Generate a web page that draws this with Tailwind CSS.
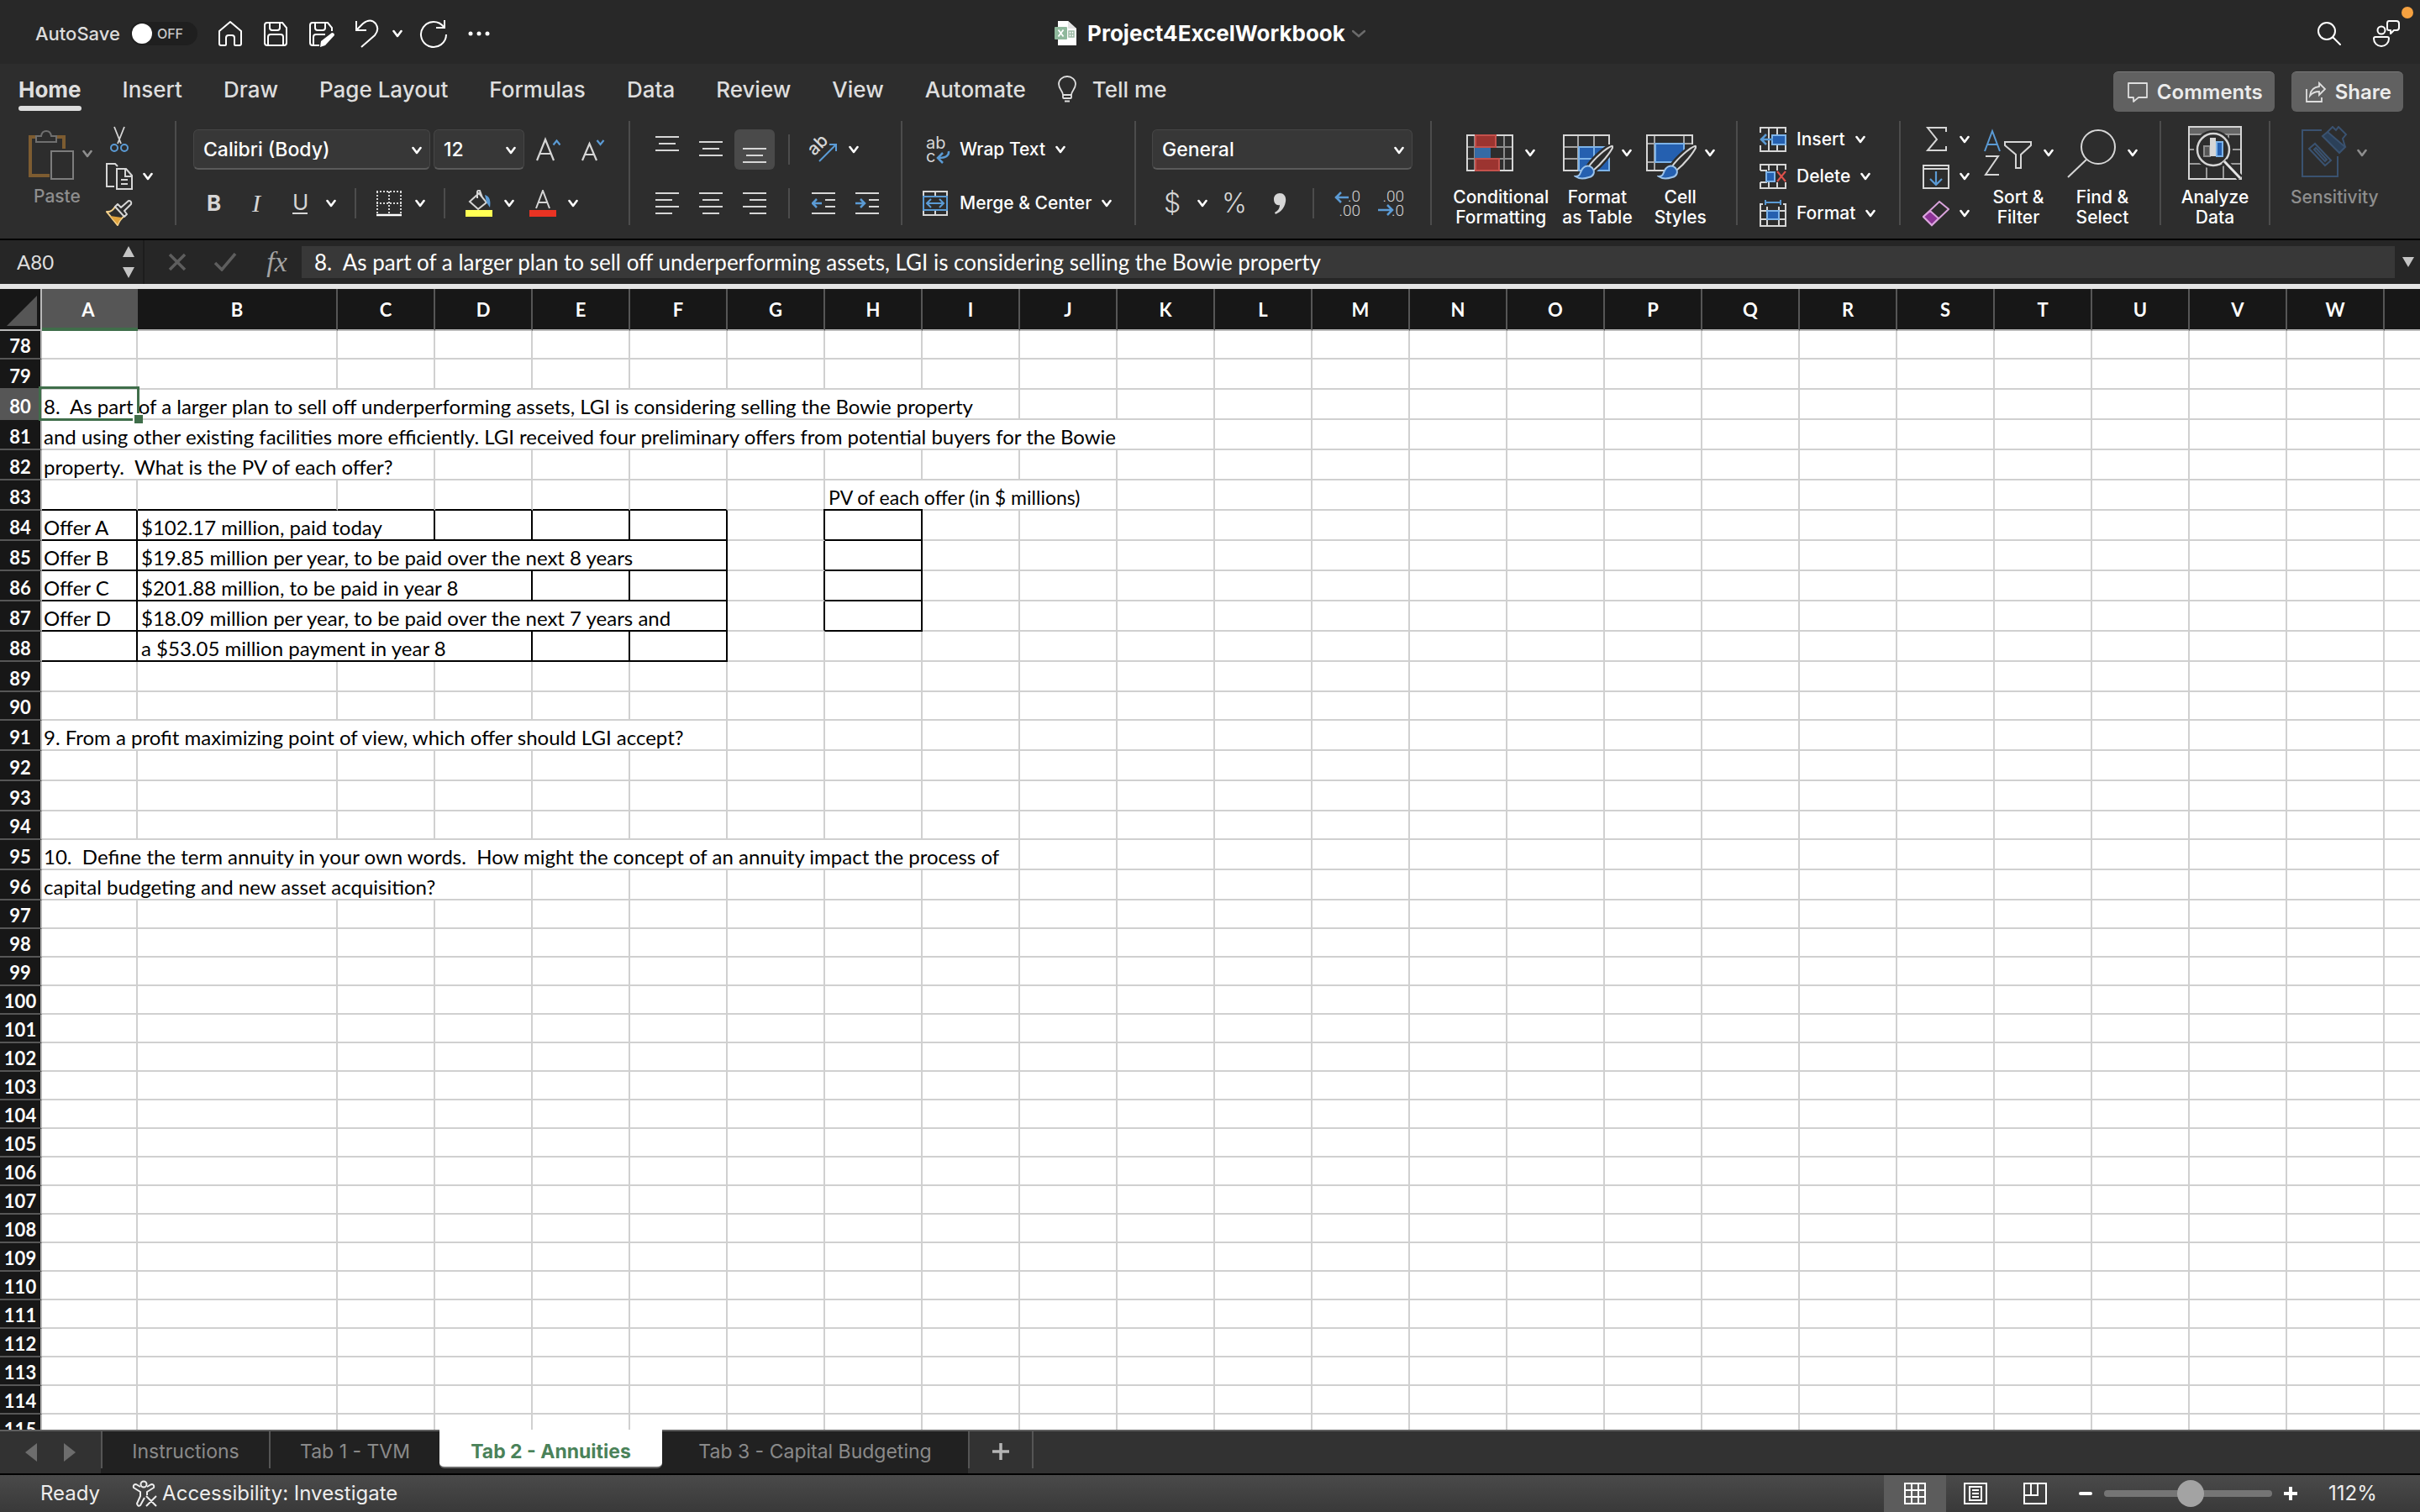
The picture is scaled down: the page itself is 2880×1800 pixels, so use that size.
<!DOCTYPE html>
<html lang="en">
<head>
    <meta charset="UTF-8">
    <meta name="viewport" content="width=device-width, initial-scale=1.0">
    <title>Project4ExcelWorkbook</title>
    <script src="https://cdn.jsdelivr.net/npm/@tailwindcss/browser@4"></script>
</head>
<body class="flex flex-col h-screen overflow-hidden bg-[#2d2d2d] font-['Inter',sans-serif] text-white">

    <!-- Shared shapes -->
    <svg class="hidden">
        <symbol id="chevron" viewBox="0 0 12 10"><path d="M1.500 2 6 8l4.500-6" fill="none" stroke="currentColor" stroke-width="2.600" stroke-linecap="round" stroke-linejoin="round"/></symbol>
        <symbol id="brush" viewBox="0 0 48 42">
            <path d="M45 2c-6 2-20 14-27 24l5 5C33 23 43 10 46 4c.5-1.500 0-2.500-1-2z" fill="#2d2d2d" stroke="#2d2d2d" stroke-width="7"/>
            <path d="M45 2c-6 2-20 14-27 24l5 5C33 23 43 10 46 4c.5-1.500 0-2.500-1-2z" fill="#2d2d2d" stroke="#d6d6d6" stroke-width="2"/>
            <path d="M2 38c5 0 5-3 7-7 3-6 9-7 13-3 4 5 1 10-4 11-6 2-12 2-16-1z" fill="#2560b0" stroke="#9cc3ea" stroke-width="2"/>
        </symbol>
    </svg>

    <!-- Title bar -->
    <header class="relative flex h-[76px] shrink-0 items-center justify-between bg-[#282828] pt-1 pl-[42px] pr-6">
        <div class="flex items-center">
            <label for="autosave" class="text-[22px] font-medium text-[#dcdcdc]">AutoSave</label>
            <button id="autosave" type="button" class="ml-3 flex h-7 w-20 items-center gap-1.5 rounded-full bg-[#1f1f1f] p-0.5 text-base font-medium text-[#c9c9c9]">
                <span class="size-6 rounded-full bg-white"></span>OFF
            </button>
            <button type="button" aria-label="Home" class="ml-6">
                <svg class="h-8 w-[30px]" viewBox="0 0 30 32" fill="none" stroke="#fff" stroke-width="2"><path d="M15 2 2 13v15q0 2 2 2h5q1 0 1-1v-8q0-3 3-3h4q3 0 3 3v8q0 1 1 1h5q2 0 2-2V13z" stroke-linejoin="round"/></svg>
            </button>
            <button type="button" aria-label="Save" class="ml-6">
                <svg class="h-8 w-[30px]" viewBox="0 0 30 32" fill="none" stroke="#fff" stroke-width="2"><path d="M5 3h18l5 6v18q0 3-3 3H5q-3 0-3-3V6q0-3 3-3z"/><path d="M8 3v6q0 3 3 3h6q3 0 3-3V3M6 30V20q0-3 3-3h12q3 0 3 3v10"/></svg>
            </button>
            <button type="button" aria-label="Save a copy" class="ml-6">
                <svg class="h-8 w-8" viewBox="0 0 32 32" fill="none" stroke="#fff" stroke-width="2"><path d="M13 30H5q-3 0-3-3V6q0-3 3-3h18l5 6v4"/><path d="M8 3v6q0 3 3 3h6q3 0 3-3V3M6 30V20q0-3 3-3h11"/><path d="M28 15q3 0 3 3L20 30l-6 2 1-7z" fill="#fff" stroke="none"/></svg>
            </button>
            <button type="button" aria-label="Undo" class="ml-[22px]">
                <svg class="h-9 w-[30px]" viewBox="0 0 30 36" fill="none" stroke="#fff" stroke-width="2"><path d="M3 3v11h12M4 13l7-7q9-7 15 0 5 7-1 14L9 34"/></svg>
            </button>
            <button type="button" aria-label="Undo history" class="ml-4"><svg class="h-2.5 w-3"><use href="#chevron"/></svg></button>
            <button type="button" aria-label="Repeat" class="ml-5">
                <svg class="h-9 w-[34px]" viewBox="0 0 34 36" fill="none" stroke="#fff" stroke-width="2"><path d="M30 2v9H20M29 10A15 15 0 1 0 32 19"/></svg>
            </button>
            <button type="button" aria-label="More" class="ml-6">
                <svg class="h-2 w-[26px]" viewBox="0 0 26 8" fill="#fff"><circle cx="3" cy="4" r="2.500"/><circle cx="13" cy="4" r="2.500"/><circle cx="23" cy="4" r="2.500"/></svg>
            </button>
        </div>
        <div class="absolute inset-x-0 flex items-center justify-center">
            <svg class="h-[30px] w-[27px]" viewBox="0 0 27 30"><path d="M4 0h12l10 9v20H4z" fill="#fff"/><path d="M16 0l10 9H16z" fill="#e3e3e3"/><path d="M17 12h6v7h-6zM20 12v7M17 15.500h6" fill="none" stroke="#9dbba6" stroke-width="1.500"/><rect y="7" width="15" height="15" rx="1" fill="#8fb89c"/><path d="M4.500 10.500l6 8M10.500 10.500l-6 8" stroke="#fff" stroke-width="1.800"/></svg>
            <h1 class="ml-3 text-[26px] font-bold leading-8">Project4ExcelWorkbook</h1>
            <svg class="ml-2 h-2.5 w-4 text-[#6b6b6b]" viewBox="0 0 16 10"><path d="M1 2l7 6 7-6" fill="none" stroke="currentColor" stroke-width="2.500" stroke-linecap="round"/></svg>
        </div>
        <div class="relative flex items-center gap-[38px]">
            <button type="button" aria-label="Search">
                <svg class="size-7" viewBox="0 0 28 28" fill="none" stroke="#fff" stroke-width="2" stroke-linecap="round"><circle cx="11" cy="11" r="10"/><path d="M18.500 18.500 27 27"/></svg>
            </button>
            <button type="button" aria-label="Account" class="relative">
                <svg class="size-8" viewBox="0 0 32 32" fill="none" stroke="#fff" stroke-width="2" stroke-linejoin="round"><circle cx="10" cy="12" r="4.500"/><path d="M3 20h14q2 0 2 2c0 5-4 9-9 9s-9-4-9-9q0-2 2-2zM19 1h9q3 0 3 3v5q0 3-3 3h-3l-4 4v-4h-2q-2 0-2-2V4q0-3 2-3z"/></svg>
                <span class="absolute -top-4 -right-4 size-3.5 rounded-full bg-[#f5a140]"></span>
            </button>
        </div>
    </header>

    <!-- Ribbon tabs -->
    <div class="flex h-[66px] shrink-0 items-center justify-between pl-[22px] pr-5">
        <nav class="flex items-center gap-[49px] pb-1.5 text-[26px] font-medium text-[#dedede]">
            <a href="#" class="relative font-bold">Home<span class="absolute inset-x-0 -bottom-1.5 h-1.5 rounded-full bg-[#dedede]"></span></a>
            <a href="#">Insert</a>
            <a href="#">Draw</a>
            <a href="#">Page Layout</a>
            <a href="#">Formulas</a>
            <a href="#">Data</a>
            <a href="#">Review</a>
            <a href="#">View</a>
            <a href="#">Automate</a>
            <a href="#" class="-ml-3 flex items-center gap-[18px]">
                <svg class="h-8 w-6" viewBox="0 0 24 32" fill="none" stroke="#dedede" stroke-width="1.800"><path d="M7 23c0-5-5-7-5-13a10 9 0 0 1 20 0c0 6-5 8-5 13v3q0 1-1 1H8q-1 0-1-1zM7 23h10M9 30.500h6"/></svg>
                Tell me
            </a>
        </nav>
        <div class="flex gap-5 text-2xl font-semibold text-[#ececec]">
            <button type="button" class="flex h-12 items-center gap-2.5 rounded-md border-t border-[#7a7a7a] bg-[#616161] px-4 pr-3.5">
                <svg class="size-[26px]" viewBox="0 0 26 26" fill="none" stroke="#dedede" stroke-width="1.800"><path d="M2 2h22v17H14l-6 5v-5H2z" stroke-linejoin="round"/></svg>
                Comments
            </button>
            <button type="button" class="flex h-12 items-center gap-2.5 rounded-md border-t border-[#7a7a7a] bg-[#616161] px-4 pr-3.5">
                <svg class="size-[26px]" viewBox="0 0 26 26" fill="none" stroke="#dedede" stroke-width="1.800"><path d="M2 9v15h18v-5M17 2l7 7-7 7v-4q-7 0-11 5 1-10 11-11z"/></svg>
                Share
            </button>
        </div>
    </div>

    <!-- Ribbon -->
    <div class="flex h-[142px] shrink-0 items-start pt-0.5 text-[21px] font-medium leading-6">

        <div class="flex h-[124px] w-[208px] pl-[34px]">
            <button type="button" class="flex items-start text-[#8e8e8e]">
                <span class="flex w-[68px] flex-col pt-1.5 text-left">
                    <svg class="mt-1 h-[62px] w-[56px]" viewBox="0 0 56 62" fill="none"><path d="M9 9H2v46h23M34 9h8v14" stroke="#7d5c31" stroke-width="4"/><path d="M9 8h6c1-8 11-8 12 0h6v7H9z" stroke="#6f6f6f" stroke-width="2"/><path d="M27 26h26v33H27z" stroke="#7d7d7d" stroke-width="2"/></svg>
                    <span class="mt-1.5 pl-1.5">Paste</span>
                </span>
                <svg class="mt-[34px] -ml-1 h-2.5 w-3"><use href="#chevron"/></svg>
            </button>
            <div class="flex flex-col gap-3 pt-1.5 pl-4">
                <button type="button" aria-label="Cut"><svg class="h-8 w-8" viewBox="0 0 32 32" fill="none"><path d="M10 1l8 20M22 1l-8 20" stroke="#d6d6d6" stroke-width="1.800"/><circle cx="10" cy="26" r="4" stroke="#5b9bd5" stroke-width="2"/><circle cx="22" cy="26" r="4" stroke="#5b9bd5" stroke-width="2"/></svg></button>
                <button type="button" aria-label="Copy" class="flex items-center gap-3"><svg class="h-8 w-8" viewBox="0 0 32 32" fill="none" stroke="#d6d6d6" stroke-width="2"><path d="M10 28H1V1h10l3 3M13 7h11l7 8v16H13zM23 7v9h8M18 20h8M18 25h8"/></svg><svg class="h-2.5 w-3"><use href="#chevron"/></svg></button>
                <button type="button" aria-label="Format Painter"><svg class="h-8 w-8" viewBox="0 0 32 32" fill="none" stroke-width="2" stroke-linejoin="round"><path d="M1 14q6 1 10-6l11 11q-6 5-8 11z" stroke="#f3d08b"/><path d="M5 19l14 2q-4 4-5 8z" fill="#e0a23c"/><path d="M11 8l3-3 4 4 9-8q4 0 3 4l-8 8 3 4-3 3z" fill="#2d2d2d" stroke="#d6d6d6"/></svg></button>
            </div>
        </div>
        <span class="h-[124px] w-0.5 bg-[#4c4c4c]"></span>

        <div class="flex h-[124px] w-[538px] flex-col gap-4 pt-2.5 pl-5">
            <div class="flex h-12 items-center">
                <div class="relative w-[282px]">
                    <select aria-label="Font" class="h-12 w-full appearance-none rounded-md border border-b-2 border-[#464646] border-b-[#5a5a5a] bg-[#373737] pl-[11px] text-[23px] font-medium"><option>Calibri (Body)</option></select>
                    <svg class="pointer-events-none absolute top-5 right-2.5 h-2.5 w-3"><use href="#chevron"/></svg>
                </div>
                <div class="relative ml-1 w-[108px]">
                    <select aria-label="Font size" class="h-12 w-full appearance-none rounded-md border border-b-2 border-[#464646] border-b-[#5a5a5a] bg-[#373737] pl-[11px] text-[23px] font-medium"><option>12</option></select>
                    <svg class="pointer-events-none absolute top-5 right-2.5 h-2.5 w-3"><use href="#chevron"/></svg>
                </div>
                <button type="button" aria-label="Increase font size" class="ml-3.5"><svg class="h-8 w-[30px]" viewBox="0 0 30 32" fill="none" stroke-width="2.200"><path d="M1 29 11 4l10 25M4.500 21h13" stroke="#d6d6d6"/><path d="M20.500 10.500l4-5 4 5" stroke="#5b9bd5"/></svg></button>
                <button type="button" aria-label="Decrease font size" class="ml-6"><svg class="h-8 w-[30px]" viewBox="0 0 30 32" fill="none" stroke-width="2.200"><path d="M1 29 9.500 9 18 29M4 22h11" stroke="#d6d6d6"/><path d="M18.500 5l4 5 4-5" stroke="#5b9bd5"/></svg></button>
            </div>
            <div class="flex h-12 items-center pl-4 text-[26px] text-[#d6d6d6]">
                <button type="button" class="w-4 font-bold">B</button>
                <button type="button" class="ml-9 w-3.5 font-['Liberation_Serif',serif] text-[30px] font-normal italic">I</button>
                <button type="button" class="ml-9 w-[18px] border-b-2 border-[#d6d6d6] font-normal">U</button>
                <svg class="ml-[22px] h-2.5 w-3 text-white"><use href="#chevron"/></svg>
                <span class="ml-[22px] h-9 w-0.5 bg-[#4c4c4c]"></span>
                <button type="button" aria-label="Borders" class="ml-6"><svg class="h-8 w-[30px]" viewBox="0 0 30 32" fill="none" stroke="#d6d6d6" stroke-width="2"><path d="M0 2h30M0 16h30M1 2v26M15 2v26M29 2v26" stroke-dasharray="2 2"/><path d="M0 30h30" stroke="#fff" stroke-width="2.500"/></svg></button>
                <svg class="ml-4 h-2.5 w-3 text-white"><use href="#chevron"/></svg>
                <span class="ml-[22px] h-9 w-0.5 bg-[#4c4c4c]"></span>
                <button type="button" aria-label="Fill color" class="ml-6"><svg class="h-8 w-8" viewBox="0 0 32 32" fill="none"><path d="M5 14 16 4l9 11-10 8zM14 10V3q0-3 3-2l3 8" stroke="#d6d6d6" stroke-width="2"/><path d="M23 6q8 2 6 15l-4-6z" fill="#5b9bd5"/><path d="M0 24h32v8H0z" fill="#ffff54"/></svg></button>
                <svg class="ml-3.5 h-2.5 w-3 text-white"><use href="#chevron"/></svg>
                <button type="button" aria-label="Font color" class="ml-[18px]"><svg class="h-8 w-8" viewBox="0 0 32 32" fill="none"><path d="M8 22 16 1l8 21M10.500 15h11" stroke="#d6d6d6" stroke-width="2"/><path d="M0 24h32v8H0z" fill="#ea3323"/></svg></button>
                <svg class="ml-3.5 h-2.5 w-3 text-white"><use href="#chevron"/></svg>
            </div>
        </div>
        <span class="h-[124px] w-0.5 bg-[#4c4c4c]"></span>

        <div class="flex h-[124px] w-[322px] flex-col gap-4 pt-2.5 pl-[30px]">
            <div class="flex h-12 items-center">
                <button type="button" aria-label="Top align"><svg class="h-9 w-7" viewBox="0 0 28 36" stroke="#d6d6d6" stroke-width="2"><path d="M0 3h28M4 11h20M0 19h28"/></svg></button>
                <button type="button" aria-label="Middle align" class="ml-6"><svg class="h-9 w-7" viewBox="0 0 28 36" stroke="#d6d6d6" stroke-width="2"><path d="M0 9h28M4 17h20M0 25h28"/></svg></button>
                <button type="button" aria-label="Bottom align" class="ml-3.5 flex h-12 w-12 items-center justify-center rounded-md bg-[#4a4a4a]"><svg class="h-9 w-7" viewBox="0 0 28 36" stroke="#d6d6d6" stroke-width="2"><path d="M0 17h28M4 25h20M0 33h28"/></svg></button>
                <span class="ml-4 h-9 w-0.5 bg-[#4c4c4c]"></span>
                <button type="button" aria-label="Orientation" class="ml-6 flex items-center gap-3.5">
                    <svg class="h-8 w-8 overflow-visible" viewBox="0 0 32 32" fill="none"><text x="2" y="23" transform="rotate(-45 5 20)" fill="#d6d6d6" font-size="21">ab</text><path d="M11 30 31 10M23 10h8v8" stroke="#5b9bd5" stroke-width="2"/></svg>
                    <svg class="h-2.5 w-3"><use href="#chevron"/></svg>
                </button>
            </div>
            <div class="flex h-12 items-center">
                <button type="button" aria-label="Align left"><svg class="h-7 w-7" viewBox="0 0 28 28" stroke="#d6d6d6" stroke-width="2"><path d="M0 2h28M0 10h20M0 18h28M0 26h20"/></svg></button>
                <button type="button" aria-label="Center" class="ml-6"><svg class="h-7 w-7" viewBox="0 0 28 28" stroke="#d6d6d6" stroke-width="2"><path d="M0 2h28M4 10h20M0 18h28M4 26h20"/></svg></button>
                <button type="button" aria-label="Align right" class="ml-6"><svg class="h-7 w-7" viewBox="0 0 28 28" stroke="#d6d6d6" stroke-width="2"><path d="M0 2h28M8 10h20M0 18h28M8 26h20"/></svg></button>
                <span class="ml-[26px] h-9 w-0.5 bg-[#4c4c4c]"></span>
                <button type="button" aria-label="Decrease indent" class="ml-[26px]"><svg class="h-7 w-7" viewBox="0 0 28 28" fill="none" stroke="#d6d6d6" stroke-width="2"><path d="M0 2h28M16 10h12M16 18h12M0 26h28"/><path d="M12 14H1M6 9l-5 5 5 5" stroke="#5b9bd5" stroke-width="2.500"/></svg></button>
                <button type="button" aria-label="Increase indent" class="ml-6"><svg class="h-7 w-7" viewBox="0 0 28 28" fill="none" stroke="#d6d6d6" stroke-width="2"><path d="M0 2h28M16 10h12M16 18h12M0 26h28"/><path d="M0 14h11M6 9l5 5-5 5" stroke="#5b9bd5" stroke-width="2.500"/></svg></button>
            </div>
        </div>
        <span class="h-[124px] w-0.5 bg-[#4c4c4c]"></span>

        <div class="flex h-[124px] w-[276px] flex-col gap-4 pt-2.5 pl-6">
            <button type="button" class="flex h-12 items-center gap-3">
                <svg class="h-9 w-8 overflow-visible" viewBox="0 0 32 36" fill="none"><text x="4" y="17" fill="#d6d6d6" font-size="20" font-weight="400">ab</text><text x="4" y="33" fill="#d6d6d6" font-size="20" font-weight="400">c</text><path d="M31 20q1 8-12 8M24 22l-6 6 6 6" stroke="#5b9bd5" stroke-width="2.500"/></svg>
                Wrap Text
                <svg class="h-2.5 w-3"><use href="#chevron"/></svg>
            </button>
            <button type="button" class="flex h-12 items-center gap-3">
                <svg class="h-[30px] w-8" viewBox="0 0 32 30" fill="none" stroke-width="2"><path d="M1 6V1h28v5M15 1v5M1 24v5h28v-5M15 24v5" stroke="#d6d6d6"/><path d="M1 7h28v16H1zM5 15h20M10 10l-5 5 5 5M20 10l5 5-5 5" stroke="#5b9bd5"/></svg>
                Merge &amp; Center
                <svg class="h-2.5 w-3"><use href="#chevron"/></svg>
            </button>
        </div>
        <span class="h-[124px] w-0.5 bg-[#4c4c4c]"></span>

        <div class="flex h-[124px] w-[350px] flex-col gap-4 pt-2.5 pl-[19px]">
            <div class="relative w-[310px]">
                <select aria-label="Number format" class="h-12 w-full appearance-none rounded-md border border-b-2 border-[#464646] border-b-[#5a5a5a] bg-[#373737] pl-[11px] text-[23px] font-medium"><option>General</option></select>
                <svg class="pointer-events-none absolute top-5 right-2.5 h-2.5 w-3"><use href="#chevron"/></svg>
            </div>
            <div class="flex h-12 items-center pl-3.5 text-[32px] font-light text-[#d6d6d6]">
                <button type="button" class="w-5 leading-9">$</button>
                <svg class="ml-5 h-2.5 w-3 text-white"><use href="#chevron"/></svg>
                <button type="button" class="ml-4 w-8 leading-9">%</button>
                <button type="button" aria-label="Comma style" class="ml-[30px]"><svg class="h-7 w-4" viewBox="0 0 16 28" fill="#d6d6d6"><path d="M8 2c5 0 8 4 7 10-1 7-5 12-12 15l-1-2c4-2 6-5 6-9-4 1-7-2-7-7 0-4 3-7 7-7z"/></svg></button>
                <span class="ml-[31px] h-9 w-0.5 bg-[#4c4c4c]"></span>
                <button type="button" aria-label="Increase decimal" class="ml-6"><svg class="h-8 w-8 overflow-visible" viewBox="0 0 32 32" fill="none"><text x="31" y="14" text-anchor="end" fill="#d6d6d6" font-size="19" class="font-['Roboto']">.0</text><text x="31" y="31" text-anchor="end" fill="#d6d6d6" font-size="19" class="font-['Roboto']">.00</text><path d="M17 9H1M8 3 2 9l6 6" stroke="#5b9bd5" stroke-width="2.500"/></svg></button>
                <button type="button" aria-label="Decrease decimal" class="ml-5"><svg class="h-8 w-8 overflow-visible" viewBox="0 0 32 32" fill="none"><text x="31" y="14" text-anchor="end" fill="#d6d6d6" font-size="19" class="font-['Roboto']">.00</text><text x="31" y="31" text-anchor="end" fill="#d6d6d6" font-size="19" class="font-['Roboto']">.0</text><path d="M0 24h17M11 18l6 6-6 6" stroke="#5b9bd5" stroke-width="2.500"/></svg></button>
            </div>
        </div>
        <span class="h-[124px] w-0.5 bg-[#4c4c4c]"></span>

        <div class="flex h-[124px] w-[362px] items-start justify-center gap-4 pt-1.5">
            <button type="button" class="flex flex-col items-center">
                <span class="flex items-center gap-3.5">
                    <svg class="h-16 w-14" viewBox="0 0 56 64" fill="none"><path d="M10 10v44M45 10v44M1 25h54M1 39h54" stroke="#8d8d8d" stroke-width="2"/><path d="M1 11h54v42H1z" stroke="#d6d6d6" stroke-width="2"/><path d="M11 25h17v14H11z" fill="#356aa5" stroke="#356aa5" stroke-width="2"/><path d="M11 11h24v14H11zM11 39h28v14H11z" fill="#9c3430" stroke="#c4514c" stroke-width="2"/></svg>
                    <svg class="h-2.5 w-3"><use href="#chevron"/></svg>
                </span>
                <span class="mt-[9px]">Conditional<br>Formatting</span>
            </button>
            <button type="button" class="flex flex-col items-center">
                <span class="flex items-center gap-2.5">
                    <svg class="h-16 w-[60px]" viewBox="0 0 60 64" fill="none"><path d="M18 10v44M37 10v44M1 25h54M1 39h54" stroke="#a5a5a5" stroke-width="2"/><path d="M1 11h54v42H1z" stroke="#d6d6d6" stroke-width="2"/><path d="M19 25h36v28H19z" fill="#2560b0" stroke="#7db3e8" stroke-width="2"/><path d="M37 25v28M19 39h36" stroke="#7db3e8" stroke-width="2"/><use href="#brush" x="13" y="22" width="48" height="42"/></svg>
                    <svg class="h-2.5 w-3"><use href="#chevron"/></svg>
                </span>
                <span class="mt-[9px]">Format<br>as Table</span>
            </button>
            <button type="button" class="flex flex-col items-center">
                <span class="flex items-center gap-2.5">
                    <svg class="h-16 w-[60px]" viewBox="0 0 60 64" fill="none"><path d="M10 10v44M45 10v12M1 21h54M1 43h34" stroke="#a5a5a5" stroke-width="2"/><path d="M30 53H1V11h54v12" stroke="#d6d6d6" stroke-width="2"/><path d="M11 21h34v22H11z" fill="#2560b0" stroke="#7db3e8" stroke-width="2"/><use href="#brush" x="13" y="22" width="48" height="42"/></svg>
                    <svg class="h-2.5 w-3"><use href="#chevron"/></svg>
                </span>
                <span class="mt-[9px]">Cell<br>Styles</span>
            </button>
        </div>
        <span class="h-[124px] w-0.5 bg-[#4c4c4c]"></span>

        <div class="flex h-[124px] w-[192px] flex-col pl-[26px]">
            <button type="button" class="flex h-11 shrink-0 items-center gap-3">
                <svg class="h-[30px] w-8" viewBox="0 0 32 30" fill="none" stroke-width="2"><path d="M1 7V1h30v6M1 22v7h30v-7M11 1v28M21 1v28" stroke="#d6d6d6"/><path d="M15 10h16v11H15z" fill="#2560b0" stroke="#7db3e8"/><path d="M1 15h15M8 9l-6 6 6 6" stroke="#5b9bd5" stroke-width="2.500"/></svg>
                Insert
                <svg class="h-2.5 w-3"><use href="#chevron"/></svg>
            </button>
            <button type="button" class="flex h-11 shrink-0 items-center gap-3">
                <svg class="h-[30px] w-8" viewBox="0 0 32 30" fill="none" stroke-width="2"><path d="M1 8V1h30v6M1 22v7h30v-7M11 1v7M21 1v7M11 22v7M21 22v7M1 8h8M1 22h8" stroke="#d6d6d6"/><path d="M8 10h10v11H8z" fill="#2560b0" stroke="#7db3e8"/><path d="M21 9l10 12M31 9 21 21" stroke="#e0524c"/></svg>
                Delete
                <svg class="h-2.5 w-3"><use href="#chevron"/></svg>
            </button>
            <button type="button" class="flex h-11 shrink-0 items-center gap-3">
                <svg class="h-8 w-8" viewBox="0 0 32 32" fill="none" stroke-width="2"><path d="M7 3h18M7 0v6M25 0v6" stroke="#5b9bd5"/><path d="M4 5H1v26h30V5h-3M9 8v23M23 8v23M1 13h30M1 23h30" stroke="#d6d6d6"/><path d="M9 13h14v10H9z" fill="#2560b0" stroke="#7db3e8"/></svg>
                Format
                <svg class="h-2.5 w-3"><use href="#chevron"/></svg>
            </button>
        </div>
        <span class="h-[124px] w-0.5 bg-[#4c4c4c]"></span>

        <div class="flex h-[124px] w-[308px] pl-[26px]">
            <div class="flex flex-col">
                <button type="button" aria-label="AutoSum" class="flex h-11 shrink-0 items-center gap-3">
                    <svg class="h-[30px] w-8" viewBox="0 0 32 30" fill="none" stroke="#d6d6d6" stroke-width="2"><path d="M28 6V1H6l11 14L6 28h22v-5"/></svg>
                    <svg class="h-2.5 w-3"><use href="#chevron"/></svg>
                </button>
                <button type="button" aria-label="Fill" class="flex h-11 shrink-0 items-center gap-3">
                    <svg class="h-[30px] w-8" viewBox="0 0 32 30" fill="none" stroke="#d6d6d6" stroke-width="2"><path d="M1 2h30v27H1zM1 6h30"/><path d="M16 9v15M9 18l7 7 7-7" stroke="#5b9bd5" stroke-width="2.200"/></svg>
                    <svg class="h-2.5 w-3"><use href="#chevron"/></svg>
                </button>
                <button type="button" aria-label="Clear" class="flex h-11 shrink-0 items-center gap-3">
                    <svg class="h-8 w-8" viewBox="0 0 32 32" stroke="#d9a3dc" stroke-width="2"><path d="M20 2l11 9-20 19L1 20z" fill="none"/><path d="M9 13l10 9-8 8L1 20z" fill="#8c3396"/></svg>
                    <svg class="h-2.5 w-3"><use href="#chevron"/></svg>
                </button>
            </div>
            <button type="button" class="ml-4 flex flex-col items-center self-start pt-1.5">
                <span class="flex items-center gap-3.5">
                    <svg class="h-16 w-[58px]" viewBox="0 0 58 64" fill="none" stroke-width="2"><path d="M2 30 11 6l9 24M5 22h12" stroke="#5b9bd5"/><path d="M3 36h15L3 58h16" stroke="#d6d6d6"/><path d="M26 19h31v4L45 34v16h-6V34L26 23z" stroke="#d6d6d6"/></svg>
                    <svg class="h-2.5 w-3"><use href="#chevron"/></svg>
                </span>
                <span class="mt-[9px]">Sort &amp;<br>Filter</span>
            </button>
            <button type="button" class="ml-4 flex flex-col items-center self-start pt-1.5">
                <span class="flex items-center gap-3.5">
                    <svg class="h-16 w-[58px]" viewBox="0 0 58 64" fill="none" stroke="#d6d6d6" stroke-width="2"><circle cx="37" cy="25" r="20"/><path d="M23 40 1 61"/></svg>
                    <svg class="h-2.5 w-3"><use href="#chevron"/></svg>
                </span>
                <span class="mt-[9px]">Find &amp;<br>Select</span>
            </button>
        </div>
        <span class="h-[124px] w-0.5 bg-[#4c4c4c]"></span>

        <div class="flex h-[124px] w-[128px] items-start justify-center pt-1.5">
            <button type="button" class="flex flex-col items-center">
                <svg class="h-16 w-16" viewBox="0 0 64 64" fill="none" stroke-width="2"><path d="M1 1h62v9H1z" fill="#666"/><path d="M1 10h62M1 28h62M1 45h62M22 45v18M42 45v18M48 10v18" stroke="#9a9a9a"/><path d="M1 1h62v62H1z" stroke="#d6d6d6"/><circle cx="30" cy="28" r="23" fill="#2d2d2d"/><circle cx="30" cy="28" r="19" stroke="#d6d6d6" stroke-width="2.500"/><path d="M19 24h7v12h-7z" fill="#555" stroke="#8d8d8d"/><path d="M34 19h7v17h-7z" fill="#2560b0" stroke="#7db3e8"/><path d="M26 14h7v22h-7z" fill="#d6d6d6"/><path d="M43 42l19 20" stroke="#2d2d2d" stroke-width="8"/><path d="M43 42l19 20" stroke="#e5e5e5" stroke-width="3"/></svg>
                <span class="mt-[9px]">Analyze<br>Data</span>
            </button>
        </div>
        <span class="h-[124px] w-0.5 bg-[#4c4c4c]"></span>

        <div class="flex h-[124px] flex-1 items-start pt-1.5 pl-6">
            <button type="button" class="flex flex-col items-center text-[#8e8e8e]">
                <span class="flex items-center gap-2.5">
                    <svg class="h-16 w-14" viewBox="0 0 56 64" fill="none" stroke="#3a5270" stroke-width="2"><path d="M24 5H1v55h42V36M9 27l7-6 19 20-7 6z"/><path d="M15 28l2-2 13 14-2 2z"/><path d="M25 12l6-5 21 18-7 7z" fill="#2b4059"/><path d="M31 7l6-6 4 4 3-4 9 9-4 5 3 10"/></svg>
                    <svg class="h-2.5 w-3"><use href="#chevron"/></svg>
                </span>
                <span class="mt-[9px]">Sensitivity</span>
            </button>
        </div>
    </div>

    <!-- Formula bar -->
    <div class="flex h-[54px] shrink-0 items-center border-t-2 border-black bg-[#262626] font-['Lato',sans-serif] text-[26px]">
        <input type="text" aria-label="Name box" value="A80" class="w-[146px] bg-transparent pl-5 text-2xl text-[#dedede]">
        <svg class="h-10 w-3.5" viewBox="0 0 14 40" fill="#c4c4c4"><path d="M7 1l7 13H0zM7 39l7-13H0z"/></svg>
        <span class="ml-2.5 h-full w-0.5 bg-[#1d1d1d]"></span>
        <button type="button" aria-label="Cancel" class="ml-7"><svg class="size-[22px]" viewBox="0 0 22 22" stroke="#5e5e5e" stroke-width="3.500"><path d="M2 2l18 18M20 2 2 20"/></svg></button>
        <button type="button" aria-label="Enter" class="ml-8"><svg class="h-[22px] w-7" viewBox="0 0 28 22" fill="none" stroke="#5e5e5e" stroke-width="3.500"><path d="M2 12l8 8L26 1"/></svg></button>
        <button type="button" class="ml-8 w-[31px] font-['Liberation_Serif',serif] text-[34px] leading-8 italic text-[#a3a3a3]">fx</button>
        <input type="text" aria-label="Formula" value="8.  As part of a larger plan to sell off underperforming assets, LGI is considering selling the Bowie property" class="ml-3.5 h-[38px] flex-1 bg-[#383838] pl-[15px] text-white">
        <svg class="mr-1.5 ml-2 h-3.5 w-4" viewBox="0 0 16 14" fill="#c4c4c4"><path d="M1 1h14L8 13z"/></svg>
    </div>

    <!-- Sheet -->
    <main class="min-h-0 flex-1 overflow-hidden border-t-[6px] border-[#e4e4e4] bg-white">
        <table class="w-full table-fixed border-separate border-spacing-0 font-['Lato',sans-serif] text-2xl leading-7 text-black">
            <colgroup id="cols"></colgroup>
            <thead><tr id="letters"></tr></thead>
            <tbody id="rows"></tbody>
        </table>
    </main>

    <!-- Sheet tabs -->
    <div class="flex h-[52px] shrink-0 items-start border-t-2 border-[#5f5f5f] bg-[#323232] text-[23px] leading-[48px] text-[#8a8a8a]">
        <div class="flex h-full w-[120px] items-center gap-8 pl-[30px]">
            <button type="button" aria-label="Previous sheet"><svg class="h-[22px] w-3.5" viewBox="0 0 14 22" fill="#6d6d6d"><path d="M14 0v22L0 11z"/></svg></button>
            <button type="button" aria-label="Next sheet"><svg class="h-[22px] w-3.5" viewBox="0 0 14 22" fill="#6d6d6d"><path d="M0 0v22l14-11z"/></svg></button>
        </div>
        <nav class="flex h-full bg-[#212121]">
            <a href="#" class="h-11 w-[200px] border-l-2 border-[#555] text-center">Instructions</a>
            <a href="#" class="h-11 w-[203px] border-l-2 border-[#555] text-center">Tab 1 - TVM</a>
            <a href="#" class="-mt-0.5 h-[46px] w-[265px] rounded-b-md border-b-2 border-[#6a6a6a] bg-white pt-0.5 text-center font-bold text-[#4a8259]">Tab 2 - Annuities</a>
            <a href="#" class="w-[364px] text-center">Tab 3 - Capital Budgeting</a>
        </nav>
        <button type="button" aria-label="Add sheet" class="flex h-11 w-[78px] items-center justify-center border-x-2 border-[#555] pt-1"><svg class="size-5" viewBox="0 0 20 20" stroke="#b5b5b5" stroke-width="3.500"><path d="M10 0v20M0 10h20"/></svg></button>
    </div>

    <!-- Status bar -->
    <footer class="flex h-[46px] shrink-0 items-center justify-between border-t-2 border-black bg-linear-to-b from-[#4a4a4a] to-[#393939] text-2xl text-[#ededed]">
        <div class="flex items-center pl-12">
            <span>Ready</span>
            <button type="button" class="ml-[38px] flex items-center gap-1">
                <svg class="h-8 w-8" viewBox="0 0 32 32" fill="none" stroke="#ededed" stroke-width="2" stroke-linejoin="round"><circle cx="14" cy="5" r="3.500"/><path d="M10 8 5 5Q1 5 2 9l8 5v5L6 28q1 4 4 2l5-9M18 8l5-3q4 0 3 4l-8 5v4M17 19l12 12M29 19 17 31"/></svg>
                Accessibility: Investigate
            </button>
        </div>
        <div class="flex h-full items-center">
            <button type="button" aria-label="Normal view" class="flex h-full w-[74px] items-center justify-center bg-[#5c5c5c]"><svg class="size-[26px]" viewBox="0 0 26 26" fill="none" stroke="#fff" stroke-width="2"><path d="M1 1h24v24H1zM9 1v24M17 1v24M1 9h24M1 17h24"/></svg></button>
            <button type="button" aria-label="Page layout view" class="ml-[21px]"><svg class="size-7" viewBox="0 0 28 28" fill="none" stroke="#fff" stroke-width="2"><path d="M1 2h26v24H1zM7 6h14v16H7zM10 10h8M10 14h8M10 18h8"/></svg></button>
            <button type="button" aria-label="Page break preview" class="ml-[43px]"><svg class="size-7" viewBox="0 0 28 28" fill="none" stroke="#fff" stroke-width="2"><path d="M1 2h26v24H1zM1 16h16V2M9 2v14"/></svg></button>
            <button type="button" aria-label="Zoom out" class="ml-[38px] h-1 w-4 rounded-sm bg-white"></button>
            <input type="range" aria-label="Zoom" value="52" class="ml-3.5 h-2 w-[200px] appearance-none rounded-full bg-[#757575] [&::-webkit-slider-thumb]:size-8 [&::-webkit-slider-thumb]:appearance-none [&::-webkit-slider-thumb]:rounded-full [&::-webkit-slider-thumb]:bg-[#a3a3a3]">
            <button type="button" aria-label="Zoom in" class="ml-3.5"><svg class="size-4" viewBox="0 0 16 16" stroke="#fff" stroke-width="4"><path d="M8 0v16M0 8h16"/></svg></button>
            <span class="w-[146px] pl-[37px]">112%</span>
        </div>
    </footer>

    <script>
        const letters = 'ABCDEFGHIJKLMNOPQRSTUVWX'.split('');
        const firstRow = 78;
        const lastRow = 115;
        const tallRows = [79, 80, 81, 82, 83, 84, 85, 86, 87, 88, 89, 91, 92, 93, 95, 96];

        // row -> column -> [text, colspan]
        const cells = {
            80: { 0: ['8.  As part of a larger plan to sell off underperforming assets, LGI is considering selling the Bowie property', 9] },
            81: { 0: ['and using other existing facilities more efficiently. LGI received four preliminary offers from potential buyers for the Bowie', 11] },
            82: { 0: ['property.  What is the PV of each offer?', 3] },
            83: { 7: ['PV of each offer (in $ millions)', 3] },
            84: { 0: ['Offer A', 1], 1: ['$102.17 million, paid today', 2] },
            85: { 0: ['Offer B', 1], 1: ['$19.85 million per year, to be paid over the next 8 years', 5] },
            86: { 0: ['Offer C', 1], 1: ['$201.88 million, to be paid in year 8', 3] },
            87: { 0: ['Offer D', 1], 1: ['$18.09 million per year, to be paid over the next 7 years and', 5] },
            88: { 1: ['a $53.05 million payment in year 8', 3] },
            91: { 0: ['9. From a profit maximizing point of view, which offer should LGI accept?', 6] },
            95: { 0: ['10.  Define the term annuity in your own words.  How might the concept of an annuity impact the process of', 9] },
            96: { 0: ['capital budgeting and new asset acquisition?', 4] }
        };

        // Black outlines around the offers (A:F) and the answer boxes (H)
        function blackRight(row, col) {
            if (row >= 84 && row <= 88 && col <= 5) return true;
            return row >= 84 && row <= 87 && (col === 6 || col === 7);
        }
        function blackBottom(row, col) {
            if (row >= 83 && row <= 88 && col <= 5) return true;
            return row >= 84 && row <= 87 && col === 7;
        }

        document.getElementById('cols').innerHTML =
            '<col class="w-[50px]"><col class="w-[114px]"><col class="w-[238px]">' +
            '<col class="w-[116px]">'.repeat(21) + '<col>';

        document.getElementById('letters').innerHTML =
            '<th class="h-[50px] border-r-2 border-b-2 border-[#b9b9b9] bg-[#171717] p-0 align-bottom"><svg class="mb-1 ml-2 h-9 w-9" viewBox="0 0 36 36" fill="#565656"><path d="M36 0v36H0z"/></svg></th>' +
            letters.map((l, i) => {
                if (i === 0) return `<th class="h-[50px] border-b-4 border-[#3f6e4a] bg-[#565656] p-0 pt-1 pr-1 text-[22px] font-bold text-white">${l}</th>`;
                return `<th class="h-[50px] ${i < 23 ? 'border-r-2' : ''} border-b-2 border-r-[#565656] border-b-[#b9b9b9] bg-[#171717] p-0 pt-0.5 text-[22px] font-bold text-white">${i < 23 ? l : ''}</th>`;
            }).join('');

        let html = '';
        for (let r = firstRow; r <= lastRow; r++) {
            const height = tallRows.includes(r) ? 'h-9' : 'h-[34px]';
            const headBg = r === 80 ? 'bg-[#565656]' : 'bg-[#171717]';
            html += `<tr><th class="${height} ${headBg} border-r-2 border-b-2 border-r-[#b9b9b9] border-b-[#565656] p-0 align-bottom text-[22px] font-bold text-white">${r}</th>`;
            for (let c = 0; c < letters.length;) {
                const [text, span] = (cells[r] && cells[r][c]) || ['', 1];
                const end = c + span - 1;
                const line = end < 23 ? 'border-r-2' : '';
                const right = blackRight(r, end) ? 'border-r-black' : 'border-r-[#d0d0d0]';
                const bottom = blackBottom(r, c) ? 'border-b-black' : 'border-b-[#d0d0d0]';
                const indent = c === 0 ? 'pl-0.5' : 'pl-1';
                const size = r === 83 ? 'text-[23px]' : 'text-2xl';
                let extra = '';
                if (r === 80 && c === 0) {
                    // selection frame and fill handle on A80
                    extra = '<span class="absolute -top-1 -left-1 h-[41px] w-[120px] border-[3px] border-[#3f6e4a]"></span><span class="absolute top-7 left-[108px] size-3 border-t-2 border-l-2 border-white bg-[#3f6e4a]"></span>';
                } else if (r === 83 && c === 7) {
                    // the label spills over H:J, only H carries the box's top edge
                    extra = '<span class="absolute -bottom-0.5 -left-0.5 h-0.5 w-[118px] bg-black"></span>';
                }
                html += `<td colspan="${span}" class="relative ${line} border-b-2 ${right} ${bottom} p-0 ${indent} align-bottom ${size} leading-7 whitespace-pre">${text}${extra}</td>`;
                c += span;
            }
            html += '</tr>';
        }
        document.getElementById('rows').innerHTML = html;
    </script>
</body>
</html>
